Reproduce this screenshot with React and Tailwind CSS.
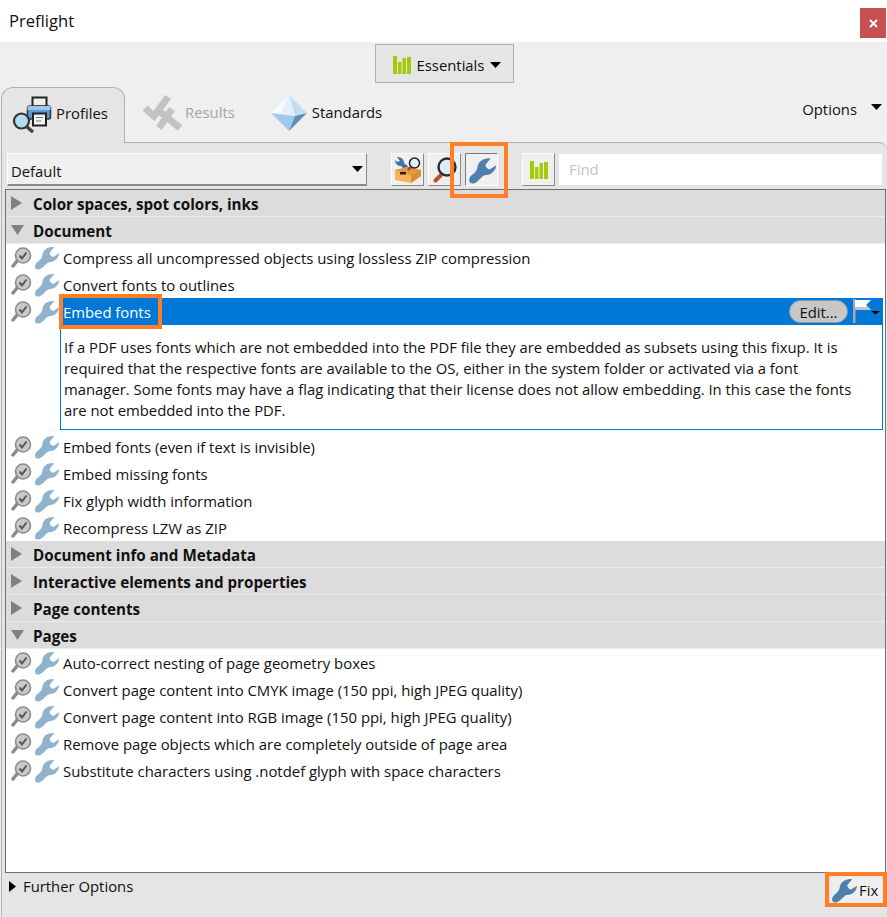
import React from "react";

const WRENCH = "M1 21 C1 23 3 24 5 23.5 C9 22 11 18 14 16.5 C19 17 24 13 24 8 L18.5 11.5 C16.5 11 15 9.5 15 7.5 L19.5 2 C13 1.5 8.5 5 8 10 C7.5 13 5 15 3 16.5 C1.5 17.8 1 19.5 1 21 Z";

const Wrench = ({ size = 24, color = "#8fb3cc" }) => (
  <svg width={size} height={size} viewBox="0 0 24 24">
    <path d={WRENCH} fill={color} />
  </svg>
);

const Bars = ({ className }) => (
  <svg width="18" height="18" viewBox="0 0 18 18" fill="#a2cc0a" className={className}>
    <rect x="0" y="0" width="4" height="18" />
    <rect x="5" y="6" width="3.5" height="12" />
    <rect x="9.5" y="2" width="3.5" height="16" />
    <rect x="14" y="1" width="4" height="17" />
  </svg>
);

const CheckLens = () => (
  <svg width="21" height="21" viewBox="0 0 21 21">
    <path d="M6 14 L2 19" stroke="#8a8a8a" strokeWidth="3.5" strokeLinecap="round" />
    <circle cx="12" cy="8.5" r="7.5" fill="#c9c9c9" stroke="#8c8c8c" strokeWidth="1.6" />
    <path d="M8.5 8.5 L11 11.5 L15.5 5.5" fill="none" stroke="#555" strokeWidth="2" />
  </svg>
);

const ProfilesIcon = () => (
  <svg width="40" height="37" viewBox="0 0 40 37">
    <rect x="20.5" y="1.5" width="14" height="9" fill="#eee" stroke="#222" strokeWidth="2" />
    <rect x="15.5" y="10" width="23" height="13" rx="2" fill="#5c9ad6" stroke="#333" strokeWidth="1.5" />
    <rect x="15.5" y="10" width="23" height="4" fill="#9cc6ec" />
    <rect x="21" y="17.5" width="13" height="12" fill="#f2f2f2" stroke="#222" strokeWidth="2" />
    <path d="M24 21.5h7M24 25h5" stroke="#777" strokeWidth="1.2" />
    <path d="M15 31 L21 36" stroke="#444" strokeWidth="3.5" />
    <circle cx="9.5" cy="25" r="7.5" fill="#b5dcee" stroke="#333" strokeWidth="2.2" />
  </svg>
);

const ResultsIcon = () => (
  <svg width="39" height="36" viewBox="0 0 39 36" fill="none" stroke="#c2c2c2" strokeWidth="7">
    <path d="M2 13 L11 21 L25 2" />
    <path d="M16 16 L37 33" />
    <path d="M29 14 L16 33" />
  </svg>
);

const DiamondIcon = () => (
  <svg width="36" height="36" viewBox="0 0 36 36">
    <polygon points="18,0 36,18 24,21" fill="#c2dcf4" />
    <polygon points="18,0 24,21 0,18" fill="#e4effa" />
    <polygon points="0,18 24,21 18,36" fill="#9fc8ec" />
    <polygon points="24,21 36,18 18,36" fill="#5e8fbd" />
    <polygon points="18,0 0,18 10,19" fill="#f7fbff" />
  </svg>
);

const ToolboxIcon = () => (
  <svg width="28" height="28" viewBox="0 0 28 28">
    <path d="M1 4 C1 8 4 10 7 10 L11 14 L16 12 L10 7 C10 3 7 1 3 1 L6 5 L3 6 Z" fill="#3f74a8" />
    <polygon points="1,14 14,11 27,14 27,20 17,27 1,24" fill="#f3b45c" />
    <polygon points="17,19 27,14 27,20 17,27" fill="#d98f33" />
    <polygon points="1,14 14,11 27,14 17,19" fill="#e29a3e" />
    <rect x="6" y="16" width="6" height="2.5" fill="#222" />
    <path d="M14 14 L18 10" stroke="#b5482c" strokeWidth="2.5" />
    <circle cx="20.5" cy="7" r="5" fill="#e4f1f8" stroke="#222" strokeWidth="1.5" />
  </svg>
);

const LensIcon = () => (
  <svg width="26" height="28" viewBox="0 0 26 28">
    <path d="M10 18 L3.5 24.5" stroke="#b5502f" strokeWidth="4" strokeLinecap="round" />
    <circle cx="15" cy="11" r="8.5" fill="#d8edf7" stroke="#2c2c2c" strokeWidth="2.4" />
  </svg>
);

const Caret = ({ className }) => (
  <svg width="11" height="6" viewBox="0 0 11 6" className={className}>
    <polygon points="0,0 11,0 5.5,6" fill="#000" />
  </svg>
);

const Mark = ({ className }) => (
  <div className={`absolute border-[4px] border-[#ff7f27] pointer-events-none ${className}`} />
);

const ToolButton = ({ children, pressed, className = "" }) => (
  <div
    className={`w-[33px] h-[33px] flex items-center justify-center border ${
      pressed
        ? "bg-[#f0f0f0] border-t-[#7a7a7a] border-l-[#7a7a7a] border-r-white border-b-white"
        : "bg-[#efefef] border-t-white border-l-white border-r-[#8a8a8a] border-b-[#8a8a8a]"
    } ${className}`}
  >
    {children}
  </div>
);

const Group = ({ title, open }) => (
  <div className="h-[27px] bg-[#dcdcdc] border-b border-[#ececec] flex items-center">
    <div className="w-[27px] pl-[5px] flex">
      {open ? (
        <svg width="13" height="10" viewBox="0 0 13 10">
          <polygon points="0,0 13,0 6.5,10" fill="#808080" />
        </svg>
      ) : (
        <svg width="11" height="14" viewBox="0 0 11 14">
          <polygon points="0,0 11,7 0,14" fill="#808080" />
        </svg>
      )}
    </div>
    <span className="text-[15.2px] font-bold text-[#111] pt-[2px]">{title}</span>
  </div>
);

const RowIcons = () => (
  <div className="w-[54px] h-[27px] shrink-0 pl-[5px] flex items-center gap-[2px]">
    <CheckLens />
    <Wrench size={25} />
  </div>
);

const Row = ({ text }) => (
  <div className="h-[27px] flex items-center">
    <RowIcons />
    <span className="text-[14.9px] text-[#111] whitespace-nowrap pl-[3px] pt-[2px]">{text}</span>
  </div>
);

const SelectedRow = () => (
  <div className="flex">
    <RowIcons />
    <div className="flex-1 mr-[2px]">
      <div className="relative h-[27px] bg-[#0078d7] flex items-center justify-between pl-[3px] pr-px">
        <span className="text-[14.85px] text-white whitespace-nowrap pt-px">Embed fonts</span>
        <Mark className="left-[-1px] top-[-4px] w-[103px] h-[35px]" />
        <div className="flex items-center">
          <div className="w-[59px] h-[23px] rounded-full bg-[#c8c8c8] border border-[#8a9aa8] flex items-center justify-center pt-px text-[14.85px] text-[#111]">
            Edit...
          </div>
          <svg width="31" height="25" viewBox="0 0 31 25" className="ml-[3px]">
            <rect x="2" y="0" width="2.5" height="24" fill="#a8a8a8" />
            <polygon points="4,1 20,1 15,6 20,11 4,11" fill="#fff" />
            <polygon points="4,8 17,8 20,11 4,11" fill="#c4c4c4" />
            <polygon points="20,12 29,12 24.5,15.5" fill="#000" />
          </svg>
        </div>
      </div>
      <div className="h-[105px] border border-t-0 border-[#0078d7] pl-[3px] pr-2 pt-[12px] text-[14.85px] leading-[21px] text-[#111]">
        If a PDF uses fonts which are not embedded into the PDF file they are embedded as subsets using this fixup. It is
        <br />
        required that the respective fonts are available to the OS, either in the system folder or activated via a font
        <br />
        manager. Some fonts may have a flag indicating that their license does not allow embedding. In this case the fonts
        <br />
        are not embedded into the PDF.
      </div>
    </div>
  </div>
);

export default function App() {
  return (
    <div className="w-[887px] h-[917px] overflow-hidden bg-[#efefef] flex flex-col font-['Open_Sans',sans-serif] text-[#111]">
      <div className="h-[42px] shrink-0 bg-white flex justify-between pl-[9px]">
        <span className="text-[16.6px] leading-[42px]">Preflight</span>
        <div className="w-[26px] h-[30px] mt-2 mr-px bg-[#c75050] flex items-center justify-center">
          <svg width="9" height="9" viewBox="0 0 9 9">
            <path d="M1 1 L8 8 M8 1 L1 8" stroke="#fff" strokeWidth="2" />
          </svg>
        </div>
      </div>

      <div className="h-[45px] shrink-0 pt-[2px] pl-px flex justify-center">
        <div className="w-[139px] h-[39px] bg-[#e5e5e5] border border-[#b0b0b0] flex items-center pl-[17px] pt-[2px]">
          <Bars />
          <span className="ml-[6px] pt-px text-[14.85px]">Essentials</span>
          <Caret className="ml-[6px]" />
        </div>
      </div>

      <div className="h-[55px] shrink-0 flex relative z-10">
        <div className="w-[124px] h-[56px] ml-px bg-[#e5e5e5] border border-b-0 border-[#b0b0b0] rounded-t-[12px] flex items-center pl-[10px] pb-[3px]">
          <ProfilesIcon />
          <span className="ml-[4px] pb-[2px] text-[14.85px]">Profiles</span>
        </div>
        <div className="flex items-center ml-[18px] pb-[3px] text-[14.85px] text-[#a5a5a5]">
          <ResultsIcon />
          <span className="ml-[3px] pb-px">Results</span>
        </div>
        <div className="flex items-center ml-[36px] pb-[3px] text-[14.85px]">
          <DiamondIcon />
          <span className="ml-[5px] pb-px">Standards</span>
        </div>
        <div className="ml-auto flex items-start pt-[11px] pr-[5px] text-[14.85px]">
          <span>Options</span>
          <Caret className="ml-[14px] mt-[6px]" />
        </div>
      </div>

      <div className="flex-1 ml-px bg-[#e5e5e5] border-l border-t border-[#b0b0b0] rounded-tr-[8px] flex flex-col">
        <div className="h-[46px] shrink-0 flex items-start pt-[10px] pl-[5px]">
          <div className="w-[360px] h-[33px] bg-[#efefef] border border-t-white border-l-white border-r-[#8a8a8a] border-b-[#8a8a8a] border-b-2 flex items-center justify-between pl-[3px] pr-[3px] text-[14.85px]">
            <span className="pt-[4px]">Default</span>
            <Caret />
          </div>
          <ToolButton className="ml-[24px]"><ToolboxIcon /></ToolButton>
          <ToolButton className="ml-[4px]"><LensIcon /></ToolButton>
          <div className="relative ml-[4px]">
            <ToolButton pressed><Wrench size={28} color="#4f80ad" /></ToolButton>
            <Mark className="left-[-15px] top-[-11px] w-[58px] h-[56px]" />
          </div>
          <ToolButton className="ml-[24px]"><Bars /></ToolButton>
          <div className="w-[323px] h-[31px] ml-[4px] mt-px bg-white pl-[10px] pt-px text-[14.85px] leading-[29px] text-[#c4c4c4]">Find</div>
        </div>

        <div className="h-[684px] shrink-0 ml-[3px] mr-px bg-white border border-[#6f6f6f]">
          <Group title="Color spaces, spot colors, inks" />
          <Group title="Document" open />
          <Row text="Compress all uncompressed objects using lossless ZIP compression" />
          <Row text="Convert fonts to outlines" />
          <SelectedRow />
          <div className="h-[3px]" />
          <Row text="Embed fonts (even if text is invisible)" />
          <Row text="Embed missing fonts" />
          <Row text="Fix glyph width information" />
          <Row text="Recompress LZW as ZIP" />
          <Group title="Document info and Metadata" />
          <Group title="Interactive elements and properties" />
          <Group title="Page contents" />
          <Group title="Pages" open />
          <Row text="Auto-correct nesting of page geometry boxes" />
          <Row text="Convert page content into CMYK image (150 ppi, high JPEG quality)" />
          <Row text="Convert page content into RGB image (150 ppi, high JPEG quality)" />
          <Row text="Remove page objects which are completely outside of page area" />
          <Row text="Substitute characters using .notdef glyph with space characters" />
        </div>

        <div className="flex-1 flex items-start justify-between pl-[7px] pr-[5px]">
          <div className="flex items-center pt-[2px] text-[14.85px]">
            <svg width="7" height="11" viewBox="0 0 7 11" className="mt-px">
              <polygon points="0,0 7,5.5 0,11" fill="#000" />
            </svg>
            <span className="ml-[7px]">Further Options</span>
          </div>
          <div className="relative w-[51px] h-[26px] mt-[4px] bg-[#efefef] flex items-center text-[14.85px]">
            <Wrench size={26} color="#4f80ad" />
            <span className="ml-[2px] pt-px">Fix</span>
            <Mark className="left-[-6px] top-[-5px] w-[62px] h-[35px]" />
          </div>
        </div>
      </div>
    </div>
  );
}
